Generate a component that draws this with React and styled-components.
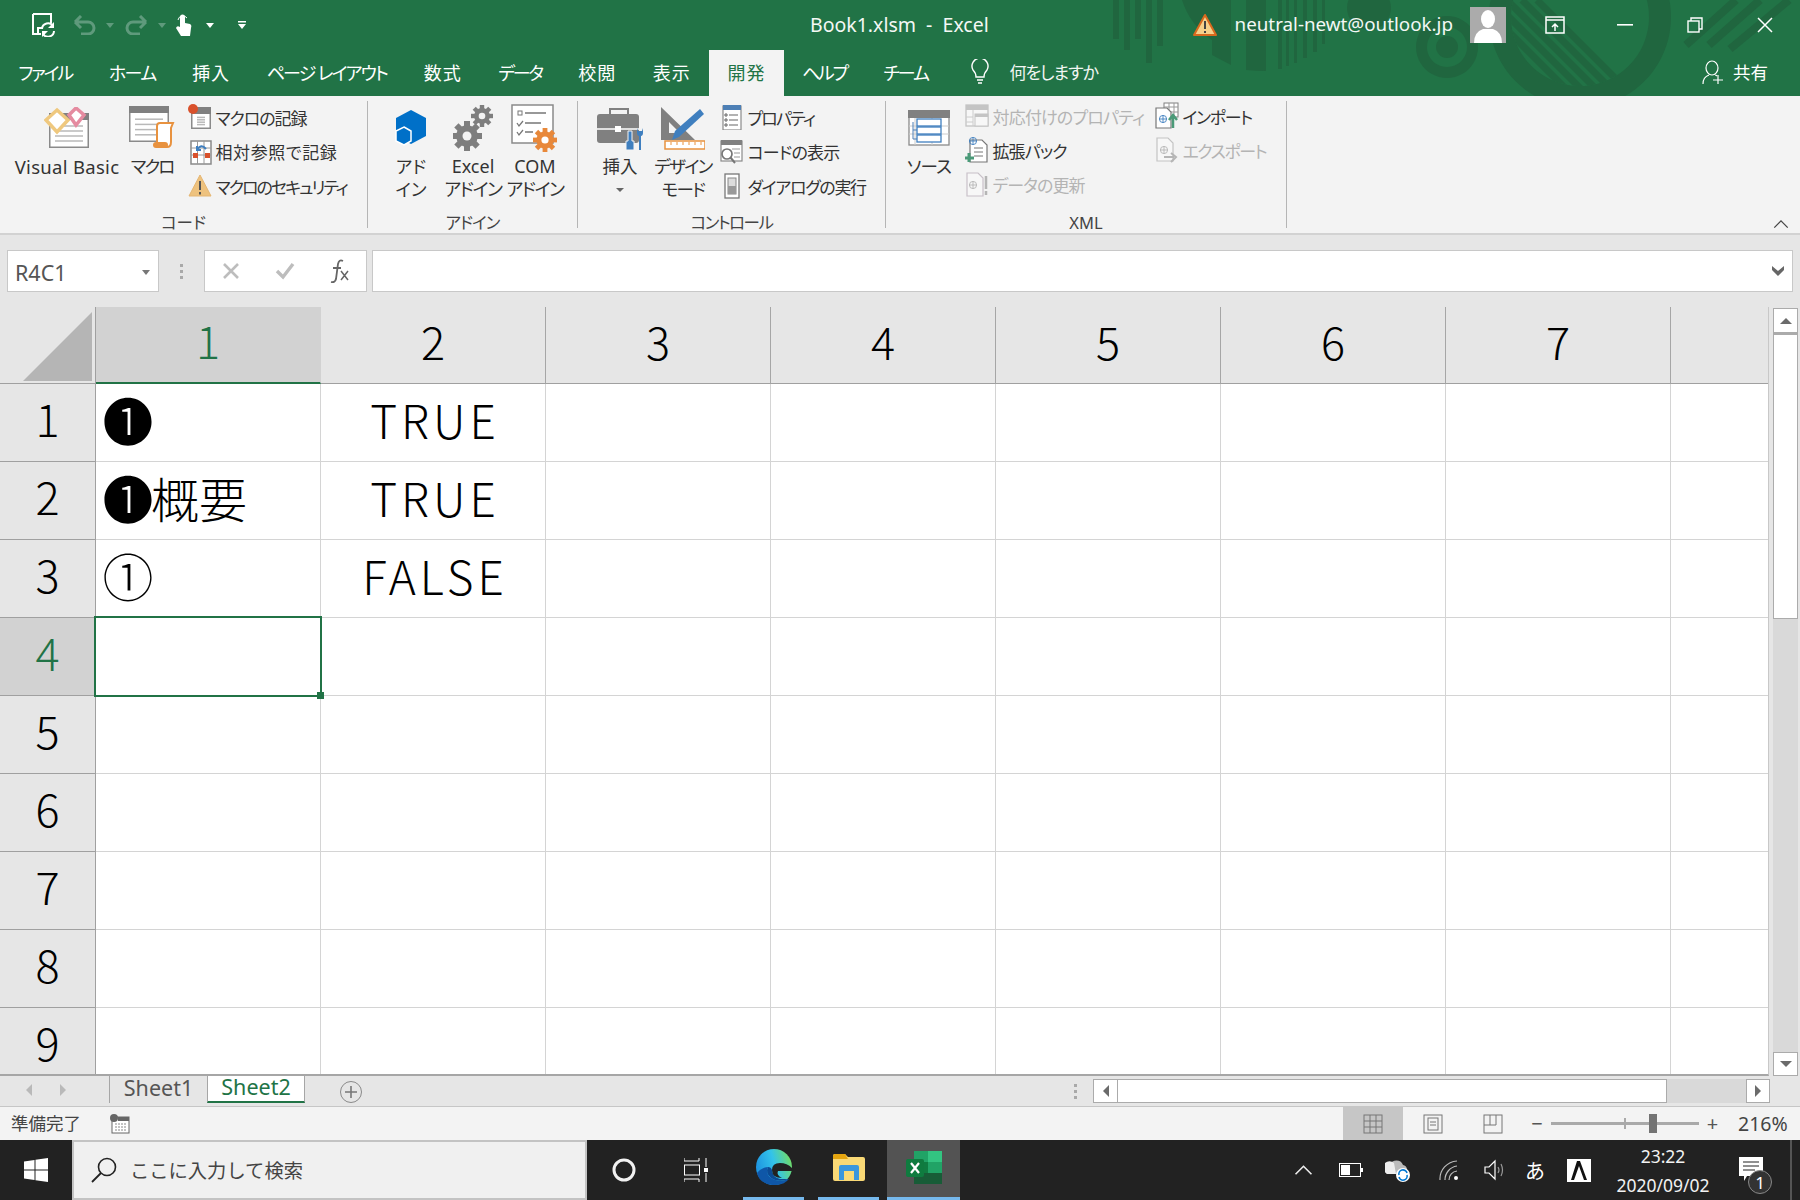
import React from 'react'
import styled, { createGlobalStyle } from 'styled-components'

const UI_FONT = `"Noto Sans", "Noto Sans CJK JP", sans-serif`
const SHEET_FONT = `"Noto Sans CJK JP", "Noto Sans", sans-serif`
const GREEN = '#217346'
const DARK_GREEN = '#20663f'

const GlobalStyle = createGlobalStyle`
html, body {
  margin: 0;
  padding: 0;
  background: #e6e6e6;
}
body {
  font-family: ${UI_FONT};
  font-feature-settings: "palt";
  overflow: hidden;
}
* {
  box-sizing: border-box;
}
`

const Page = styled.div`
display: flex;
flex-direction: column;
width: 1800px;
height: 1200px;
overflow: hidden;
`

/* ---------- title bar + tabs ---------- */

const GreenHead = styled.header`
position: relative;
height: 96px;
background-color: ${GREEN};
color: #fff;
flex-shrink: 0;
`
const HeadArt = styled.svg`
position: absolute;
left: 0;
top: 0;
width: 1800px;
height: 96px;
`
const TitleRow = styled.div`
position: relative;
display: flex;
align-items: center;
height: 50px;
`
const Qat = styled.div`
display: flex;
align-items: center;
width: 810px;
flex-shrink: 0;
padding-left: 32px;
`
const QatSlot = styled.span`
display: flex;
margin-left: ${props => props.$ml || 0}px;
`
const Title = styled.div`
font-size: 19.5px;
font-feature-settings: normal;
white-space: pre;
color: #f4f8f5;
padding-bottom: 2px;
`
const Account = styled.div`
display: flex;
align-items: center;
margin-left: auto;
`
const AccountName = styled.span`
font-size: 18.8px;
margin: 0 17px 2px 18px;
color: #f4f8f5;
`
const Avatar = styled.div`
display: flex;
width: 36px;
height: 36px;
background-color: #ababab;
margin-right: 14px;
overflow: hidden;
`
const WinButton = styled.div`
display: flex;
align-items: center;
justify-content: center;
width: 70px;
height: 50px;
`
const TabRow = styled.nav`
position: relative;
display: flex;
align-items: stretch;
height: 46px;
`
const Tab = styled.div`
display: flex;
align-items: center;
padding: 0 18.3px 3px;
font-size: 18px;
letter-spacing: ${props => props.$ls ?? 1}px;
white-space: pre;
background-color: ${props => (props.$active ? '#f3f3f3' : 'transparent')};
color: ${props => (props.$active ? GREEN : '#fff')};
`
const TellMe = styled.div`
display: flex;
align-items: center;
gap: 19px;
margin-left: 24px;
padding-bottom: 3px;
font-size: 17px;
letter-spacing: -1px;
color: #f1f6f3;
`
const Share = styled.div`
display: flex;
align-items: center;
gap: 9px;
margin-left: auto;
padding: 0 32px 3px 0;
font-size: 17.5px;
`

/* ---------- ribbon ---------- */

const Ribbon = styled.section`
display: flex;
height: 139px;
background-color: #f3f3f3;
border-bottom: 2px solid #d2d2d2;
color: #333;
font-size: 17px;
flex-shrink: 0;
`
const Group = styled.div`
display: flex;
flex-direction: column;
width: ${props => props.$w}px;
height: 127px;
margin-top: 5px;
border-right: 1px solid #b5b5b5;
flex-shrink: 0;
`
const GroupBody = styled.div`
display: flex;
flex: 1;
padding-left: ${props => props.$pad || 0}px;
`
const GroupLabel = styled.div`
height: 20px;
line-height: 20px;
margin-bottom: -5px;
font-size: 16.5px;
letter-spacing: ${props => props.$ls || 0}px;
text-align: center;
color: #444;
`
const LargeButton = styled.div`
display: flex;
flex-direction: column;
align-items: center;
width: ${props => props.$w}px;
flex-shrink: 0;
`
const LargeIcon = styled.div`
display: flex;
align-items: center;
justify-content: center;
height: 54px;
`
const LargeText = styled.div`
font-size: ${props => props.$fs || 17.5}px;
letter-spacing: ${props => props.$ls || 0}px;
line-height: 23px;
text-align: center;
white-space: nowrap;
`
const TightKana = styled.span`
letter-spacing: -1.4px;
`
const Caret = styled.div`
width: 0;
height: 0;
margin-top: 10px;
border: 4px solid transparent;
border-top: 4px solid #666;
border-bottom: 0;
`
const SmallColumn = styled.div`
display: flex;
flex-direction: column;
width: ${props => (props.$w ? `${props.$w}px` : 'auto')};
margin-left: ${props => props.$ml || 0}px;
margin-top: ${props => props.$top ?? -1}px;
`
const SmallButton = styled.div`
display: flex;
align-items: center;
gap: ${props => props.$gap ?? 3.5}px;
height: ${props => props.$h || 34.5}px;
white-space: nowrap;
font-size: 17px;
letter-spacing: ${props => props.$ls || 0}px;
color: ${props => (props.$off ? '#b4b4b4' : '#333')};
`
const Collapse = styled.div`
display: flex;
align-self: flex-end;
margin-left: auto;
margin-right: 11px;
margin-bottom: 4px;
`

/* ---------- formula bar ---------- */

const FormulaBar = styled.div`
display: flex;
align-items: center;
height: 72px;
padding: 0 7px;
background-color: #e6e6e6;
flex-shrink: 0;
`
const InputBox = styled.div`
display: flex;
align-items: center;
height: 42px;
background-color: #fff;
border: 1.5px solid #c8c8c8;
`
const NameBox = styled(InputBox)`
justify-content: space-between;
width: 152px;
padding: 2px 8px 0 7px;
font-size: 21.5px;
color: #555;
font-feature-settings: normal;
`
const GripDots = styled.div`
display: flex;
flex-direction: column;
gap: 3px;
width: 45px;
align-items: center;
`
const GripDot = styled.i`
display: block;
width: 3px;
height: 3px;
background-color: #a9a9a9;
`
const FxBox = styled(InputBox)`
justify-content: space-between;
width: 163px;
padding: 0 16px 0 17px;
`
const FormulaInput = styled(InputBox)`
flex: 1;
margin-left: 5px;
justify-content: flex-end;
padding-right: 7px;
`

/* ---------- sheet ---------- */

const SheetArea = styled.div`
display: flex;
height: 769px;
flex-shrink: 0;
background-color: #e6e6e6;
`
const Grid = styled.div`
display: grid;
grid-template-columns: 96px repeat(7, 225px) 98px;
grid-auto-rows: 78px;
grid-template-rows: 77px;
width: 1769px;
height: 769px;
overflow: hidden;
background-color: #fff;
border-bottom: 2px solid #a6a6a6;
border-right: 1px solid #c8c8c8;
`
const Corner = styled.div`
position: relative;
background-color: #e6e6e6;
border-right: 1px solid #a0a0a0;
border-bottom: 1px solid #a0a0a0;
`
const CornerMark = styled.div`
position: absolute;
left: 23px;
top: 5px;
width: 69px;
height: 69px;
background-color: #b5b5b5;
clip-path: polygon(100% 0, 100% 100%, 0 100%);
`
const HeaderCell = styled.div`
display: flex;
align-items: center;
justify-content: center;
font-family: ${SHEET_FONT};
font-weight: 300;
font-size: 45px;
font-feature-settings: normal;
padding-bottom: 10px;
background-color: ${props => (props.$on ? '#d2d2d2' : '#e6e6e6')};
color: ${props => (props.$on ? GREEN : '#000')};
`
const ColHead = styled(HeaderCell)`
border-right: 1px solid ${props => (props.$on ? '#d2d2d2' : '#a6a6a6')};
border-bottom: ${props => (props.$on ? `2px solid ${GREEN}` : '1px solid #a0a0a0')};
`
const RowHead = styled(HeaderCell)`
border-right: 1px solid #a0a0a0;
border-bottom: 1px solid #a0a0a0;
`
const Cell = styled.div`
position: relative;
display: flex;
align-items: center;
justify-content: ${props => (props.$center ? 'center' : 'flex-start')};
padding-left: ${props => (props.$center ? 4 : 9)}px;
padding-bottom: 7px;
font-family: ${SHEET_FONT};
font-weight: 300;
font-size: ${props => (props.$center ? 46 : 48)}px;
font-feature-settings: normal;
letter-spacing: ${props => (props.$center ? 4 : 0)}px;
white-space: nowrap;
color: #000;
border-right: 1px solid #d4d4d4;
border-bottom: 1px solid #d4d4d4;
`
const Circled = styled.span`
font-size: 51px;
margin: 0 -2.5px;
`
const ActiveBox = styled.div`
position: absolute;
z-index: 2;
left: -2px;
top: -2px;
right: -2px;
bottom: -2px;
border: 2px solid ${GREEN};
`
const FillHandle = styled.div`
position: absolute;
right: -4px;
bottom: -4px;
width: 7px;
height: 7px;
background-color: ${GREEN};
`
const VScroll = styled.div`
display: flex;
flex-direction: column;
width: 25px;
height: 769px;
margin-left: 4px;
padding-top: 1px;
`
const ScrollButton = styled.div`
display: flex;
align-items: center;
justify-content: center;
width: ${props => props.$w || '100%'};
height: ${props => props.$h || '25px'};
background-color: #fff;
border: 1.5px solid #ababab;
flex-shrink: 0;
`
const VThumb = styled.div`
height: 286px;
background-color: #fff;
border: 1.5px solid #ababab;
border-top-width: 2px;
flex-shrink: 0;
`
const VRest = styled.div`
flex: 1;
background-color: #d9d9d9;
`
const Arrow = styled.i`
width: 0;
height: 0;
border-style: solid;
border-color: transparent;
${props => props.$dir === 'up' && `border-width: 0 6px 6px; border-bottom-color: #6b6b6b;`}
${props => props.$dir === 'down' && `border-width: 6px 6px 0; border-top-color: #6b6b6b;`}
${props => props.$dir === 'left' && `border-width: 6px 6px 6px 0; border-right-color: ${props.$c || '#6b6b6b'};`}
${props => props.$dir === 'right' && `border-width: 6px 0 6px 6px; border-left-color: ${props.$c || '#6b6b6b'};`}
`

/* ---------- sheet tabs ---------- */

const TabsBar = styled.div`
display: flex;
align-items: stretch;
height: 31px;
background-color: #e6e6e6;
border-bottom: 1px solid #c6c6c6;
flex-shrink: 0;
`
const SheetNav = styled.div`
display: flex;
align-items: center;
justify-content: space-between;
width: 109px;
padding: 0 43px 2px 26px;
`
const SheetTab = styled.div`
display: flex;
align-items: center;
justify-content: center;
width: ${props => props.$w}px;
height: 27px;
padding-bottom: 3px;
font-size: 21.5px;
line-height: 24px;
font-feature-settings: normal;
background-color: ${props => (props.$active ? '#fff' : 'transparent')};
color: ${props => (props.$active ? GREEN : '#555')};
border-bottom: ${props => (props.$active ? `2px solid ${GREEN}` : 'none')};
border-right: ${props => (props.$active ? '1px solid #a6a6a6' : 'none')};
border-left: ${props => (props.$active || props.$sep ? '1px solid #a6a6a6' : 'none')};
`
const AddSheet = styled.div`
display: flex;
align-items: center;
justify-content: center;
width: 22px;
height: 22px;
margin: 5px 0 0 35px;
border: 1.5px solid #8a8a8a;
border-radius: 50%;
`
const HScroll = styled.div`
display: flex;
align-items: center;
margin-left: auto;
padding-right: 30px;
`
const HGrip = styled(GripDots)`
width: auto;
margin-right: 16px;
`
const HThumb = styled.div`
width: 549px;
height: 24px;
background-color: #fff;
border: 1.5px solid #ababab;
border-left: none;
`
const HRest = styled.div`
width: 79px;
height: 24px;
background-color: #d9d9d9;
`

/* ---------- status bar ---------- */

const StatusBar = styled.footer`
display: flex;
align-items: center;
height: 33px;
padding-left: 11px;
background-color: #f3f3f3;
color: #444;
font-size: 17.5px;
flex-shrink: 0;
`
const Ready = styled.span`
width: 99px;
padding-bottom: 2px;
font-feature-settings: normal;
`
const ViewButton = styled.div`
display: flex;
align-items: center;
justify-content: center;
width: ${props => props.$w || 60}px;
height: 33px;
background-color: ${props => (props.$on ? '#c6c6c6' : 'transparent')};
`
const StatusRight = styled.div`
display: flex;
align-items: center;
margin-left: auto;
`
const ZoomSign = styled.span`
width: ${props => props.$w || 26}px;
text-align: center;
font-size: 20px;
color: #555;
`
const ZoomTrack = styled.div`
position: relative;
width: 148px;
height: 3px;
background-color: #a9a9a9;
`
const ZoomTick = styled.div`
position: absolute;
left: 73px;
top: -4px;
width: 2px;
height: 11px;
background-color: #a9a9a9;
`
const ZoomThumb = styled.div`
position: absolute;
left: 98px;
top: -8px;
width: 8px;
height: 19px;
background-color: #737373;
`
const ZoomValue = styled.span`
width: 74px;
padding-left: 12px;
font-size: 19.5px;
font-feature-settings: normal;
color: #444;
`

/* ---------- taskbar ---------- */

const Taskbar = styled.div`
display: flex;
align-items: stretch;
height: 60px;
background-color: #222;
color: #fff;
flex-shrink: 0;
`
const StartButton = styled.div`
display: flex;
align-items: center;
justify-content: center;
width: 72px;
`
const SearchBox = styled.div`
display: flex;
align-items: center;
gap: 13px;
width: 515px;
padding-left: 17px;
background-color: #f0f0f0;
border: 2px solid #c3c3c3;
font-size: 19.3px;
font-feature-settings: normal;
color: #444;
`
const TaskIcon = styled.div`
display: flex;
align-items: center;
justify-content: center;
width: ${props => props.$w}px;
margin-left: ${props => props.$ml || 0}px;
`
const PinnedApp = styled.div`
display: flex;
align-items: center;
justify-content: center;
width: ${props => props.$w}px;
margin-left: ${props => props.$ml || 0}px;
padding-bottom: 3px;
background-color: ${props => (props.$on ? '#535353' : 'transparent')};
border-bottom: 3px solid #76b9ed;
`
const Tray = styled.div`
display: flex;
align-items: stretch;
margin-left: auto;
`
const TrayItem = styled.div`
display: flex;
align-items: center;
justify-content: center;
width: ${props => props.$w}px;
font-size: ${props => props.$fs || 17}px;
`
const Clock = styled.div`
display: flex;
flex-direction: column;
align-items: center;
justify-content: center;
gap: 5px;
width: 124px;
font-size: 17.5px;
line-height: 24px;
font-feature-settings: normal;
color: #f2f2f2;
`
const NotifyWrap = styled.div`
position: relative;
display: flex;
align-items: center;
justify-content: center;
width: 65px;
padding-right: 14px;
`
const NotifyBadge = styled.div`
position: absolute;
left: 23px;
top: 30px;
display: flex;
align-items: center;
justify-content: center;
width: 24px;
height: 24px;
border-radius: 50%;
background-color: #333;
border: 1.5px solid #888;
font-size: 17px;
`
const DesktopEdge = styled.div`
width: 10px;
border-left: 2px solid #555;
`

/* ---------- drawings ---------- */

const Sheetlet = ({ x, y, w, h, head = '#808080' }) => {
  const lines = []
  for (let i = 1; i < 5; i++) {
    lines.push(<line key={i} x1={x + 6} x2={x + w - 6} y1={y + 8 + (i * (h - 10)) / 5} y2={y + 8 + (i * (h - 10)) / 5} stroke="#b9b9b9" strokeWidth="1.5" />)
  }
  return (
    <g>
      <rect x={x + 0.75} y={y + 0.75} width={w - 1.5} height={h - 1.5} fill="#fff" stroke="#8a8a8a" strokeWidth="1.5" />
      <rect x={x} y={y} width={w} height={7} fill={head} />
      {lines}
    </g>
  )
}

const VbIcon = () => (
  <svg width="46" height="42" viewBox="0 0 46 42">
    <Sheetlet x={5} y={6} w={40} h={35} />
    <path d="M13 3 L24 13 L13 25 L2 13 Z" fill="#fff" stroke="#efc87e" strokeWidth="3.5" />
    <path d="M32 1 L40 8 L32 18 L25 8 Z" fill="#fff" stroke="#e58ba0" strokeWidth="3.5" />
  </svg>
)
const MacroIcon = () => (
  <svg width="46" height="44" viewBox="0 0 46 44">
    <Sheetlet x={0} y={0} w={40} h={36} />
    <path d="M28 20 Q28 17 31 17 L44 17 L42 22 L42 36 Q42 41 38 41 L28 41 Z" fill="#fff" stroke="#e8923f" strokeWidth="2" />
    <rect x="24" y="36" width="15" height="6" rx="3" fill="#e8923f" />
  </svg>
)
const RecordIcon = () => (
  <svg width="24" height="26" viewBox="0 0 24 26">
    <Sheetlet x={3} y={3} w={20} h={22} />
    <circle cx="5" cy="5" r="5" fill="#d9512c" />
  </svg>
)
const RelativeIcon = () => (
  <svg width="24" height="26" viewBox="0 0 24 26">
    <rect x="3" y="2" width="20" height="23" fill="#fff" stroke="#8a8a8a" strokeWidth="1.5" />
    <path d="M3 9H23M3 16H23M9.5 2V25M16 2V25" stroke="#9a9a9a" />
    <rect x="5" y="14" width="5" height="5" fill="#d9512c" />
    <rect x="17" y="14" width="5" height="5" fill="#d9512c" />
    <path d="M9 11 Q13 4 18 10 M9 7V11H13" fill="none" stroke="#3f7fbf" strokeWidth="2" />
  </svg>
)
const WarnSoftIcon = () => (
  <svg width="24" height="24" viewBox="0 0 24 24">
    <path d="M12 1 L23 22 L1 22 Z" fill="#eec27e" stroke="#e5b672" strokeLinejoin="round" />
    <path d="M12 7V16M12 18V20.5" stroke="#555" strokeWidth="2" />
  </svg>
)
const AddinIcon = () => (
  <svg width="32" height="36" viewBox="0 0 32 36">
    <path d="M16 0 L31 8 L31 26 L16 34 L1 26 L1 8 Z" fill="#0070c8" />
    <path d="M9 17 L16 21 L16 31 L9 35 L1 31 L1 21 Z" fill="#0070c8" stroke="#fff" strokeWidth="1.5" />
  </svg>
)
const Gear = ({ cx, cy, r, fill, hole = '#f3f3f3' }) => {
  const teeth = []
  for (let a = 0; a < 4; a++) {
    teeth.push(<rect key={a} x={cx - r * 0.2} y={cy - r} width={r * 0.4} height={r * 2} fill={fill} transform={`rotate(${a * 45} ${cx} ${cy})`} />)
  }
  return (
    <g>
      {teeth}
      <circle cx={cx} cy={cy} r={r * 0.72} fill={fill} />
      <circle cx={cx} cy={cy} r={r * 0.3} fill={hole} />
    </g>
  )
}
const GearsIcon = () => (
  <svg width="40" height="46" viewBox="0 0 40 46">
    <Gear cx={29} cy={11} r={11} fill="#7e7e7e" />
    <Gear cx={14} cy={31} r={15} fill="#7e7e7e" />
  </svg>
)
const ComIcon = () => (
  <svg width="48" height="48" viewBox="0 0 48 48">
    <rect x="1" y="1" width="41" height="38" fill="#fff" stroke="#8a8a8a" strokeWidth="1.5" />
    <rect x="7" y="7" width="4" height="4" fill="none" stroke="#777" />
    <path d="M14 9H35M6 19l2 3 4-5M14 19H30M6 28l2 3 4-5M14 28H22" fill="none" stroke="#777" strokeWidth="1.3" />
    <Gear cx={34} cy={36} r={12} fill="#e8883a" hole="#fff" />
  </svg>
)
const BriefcaseIcon = () => (
  <svg width="46" height="44" viewBox="0 0 46 44">
    <path d="M13 8V3H31V8" fill="none" stroke="#808080" strokeWidth="2" />
    <rect x="0" y="8" width="42" height="29" rx="3" fill="#808080" />
    <path d="M0 23H42" stroke="#fff" strokeWidth="1.3" />
    <rect x="18" y="20" width="6" height="6" fill="#fff" />
    <path d="M31 25h4v10h2v9h-8v-9h2z" fill="#3f7fbf" stroke="#f3f3f3" />
    <path d="M40 22v5c0 2 1 3 2 3v14h2V30c1 0 2-1 2-3v-5l-1 3h-4z" fill="#3f7fbf" />
  </svg>
)
const DesignIcon = () => (
  <svg width="44" height="44" viewBox="0 0 44 44">
    <path d="M0 1 L34 34 L0 34 Z M8 16 L8 27 L19 27 Z" fill="#808080" fillRule="evenodd" />
    <path d="M11 34 L14 25 L39 3 L43 8 L18 31 Z" fill="#3f7fbf" />
    <rect x="4" y="35" width="40" height="8" fill="#fff" stroke="#e8923f" strokeWidth="1.5" />
    <path d="M10 36v3M16 36v3M22 36v3M28 36v3M34 36v3M40 36v3" stroke="#e8923f" />
  </svg>
)
const PropsIcon = () => (
  <svg width="24" height="26" viewBox="0 0 24 26">
    <rect x="3" y="2" width="18" height="24" fill="#fff" stroke="#8a8a8a" strokeWidth="1.2" />
    <rect x="3" y="1" width="18" height="5" fill="#4d7fb5" />
    <path d="M9 11H18M9 16H18M9 21H18" stroke="#666" strokeWidth="1.2" />
    <path d="M5 10h2v2H5zM5 15h2v2H5zM5 20h2v2H5z" fill="none" stroke="#666" />
  </svg>
)
const CodeIcon = () => (
  <svg width="24" height="26" viewBox="0 0 24 26">
    <rect x="1" y="2" width="21" height="20" fill="#fff" stroke="#8a8a8a" strokeWidth="1.2" />
    <rect x="1" y="1" width="21" height="5" fill="#808080" />
    <path d="M12 10H20M14 14H20M14 18H20" stroke="#999" />
    <circle cx="7" cy="15" r="5" fill="#fff" stroke="#777" strokeWidth="1.7" />
    <path d="M10.5 18.5 L15 24" stroke="#777" strokeWidth="2" />
  </svg>
)
const DialogIcon = () => (
  <svg width="24" height="26" viewBox="0 0 24 26">
    <rect x="5" y="1" width="14" height="24" fill="#fff" stroke="#777" strokeWidth="1.3" />
    <rect x="8" y="5" width="8" height="16" fill="#dcdcdc" stroke="#888" />
    <rect x="8" y="13" width="8" height="8" fill="#999" />
  </svg>
)
const SourceIcon = () => (
  <svg width="42" height="36" viewBox="0 0 42 36">
    <rect x="1" y="1" width="40" height="34" fill="#fff" stroke="#8a8a8a" strokeWidth="1.3" />
    <rect x="0" y="0" width="42" height="8" fill="#808080" />
    <path d="M7 8V35M1 16H41M1 24H41M24 8V35" stroke="#ccc" />
    <path d="M5 12V29H9M5 20H9" fill="none" stroke="#4d7fb5" />
    <rect x="9" y="9" width="24" height="7" fill="#fff" stroke="#3f7fbf" strokeWidth="1.3" />
    <rect x="9" y="17" width="24" height="7" fill="#fff" stroke="#3f7fbf" strokeWidth="1.3" />
    <rect x="9" y="25" width="24" height="7" fill="#fff" stroke="#3f7fbf" strokeWidth="1.3" />
  </svg>
)
const MapPropsIcon = () => (
  <svg width="24" height="24" viewBox="0 0 24 24">
    <rect x="1" y="1" width="22" height="21" fill="#f7f7f7" stroke="#c4c4c4" strokeWidth="1.3" />
    <rect x="1" y="1" width="22" height="5" fill="#c4c4c4" />
    <path d="M8 6V22M1 13H8M1 18H8" stroke="#ccc" />
    <rect x="10" y="10" width="13" height="12" fill="#f7f7f7" stroke="#c4c4c4" />
    <rect x="10" y="10" width="13" height="3" fill="#c4c4c4" />
  </svg>
)
const Globe = ({ cx, cy, c }) => (
  <g stroke={c} fill="none" strokeWidth="0.9">
    <circle cx={cx} cy={cy} r="3.6" />
    <path d={`M${cx - 3.6} ${cy}H${cx + 3.6}M${cx} ${cy - 3.6}V${cy + 3.6}`} />
  </g>
)
const PackIcon = () => (
  <svg width="24" height="28" viewBox="0 0 24 28">
    <path d="M5 4H17L22 9V26H5Z" fill="#fff" stroke="#777" strokeWidth="1.2" />
    <path d="M9 12H18M9 16H18M9 20H18" stroke="#777" />
    <Globe cx={8} cy={5} c="#3f7fbf" />
    <path d="M4 17V26M0 22H9" stroke="#4a9a78" strokeWidth="3" />
  </svg>
)
const RefreshIcon = () => (
  <svg width="24" height="26" viewBox="0 0 24 26">
    <path d="M2 2H13L18 7V25H2Z" fill="#f7f7f7" stroke="#c8c0c8" strokeWidth="1.2" />
    <Globe cx={8} cy={14} c="#b5b5b5" />
    <path d="M21 5V18M21 20V24" stroke="#b5b5b5" strokeWidth="2.5" />
  </svg>
)
const ImportIcon = () => (
  <svg width="24" height="28" viewBox="0 0 24 28">
    <rect x="9" y="1" width="14" height="14" fill="#fff" stroke="#808080" />
    <path d="M9 5H23M9 10H23M14 1V15M19 1V15" stroke="#999" />
    <path d="M1 6H12L16 10V26H1Z" fill="#fff" stroke="#777" strokeWidth="1.2" />
    <Globe cx={8} cy={17} c="#3f7fbf" />
    <path d="M18 26V14M14 18L18 13L22 18" fill="none" stroke="#4a9a78" strokeWidth="2.5" />
  </svg>
)
const ExportIcon = () => (
  <svg width="24" height="28" viewBox="0 0 24 28">
    <path d="M2 2H13L18 7V25H2Z" fill="#f7f7f7" stroke="#c4c4c4" strokeWidth="1.2" />
    <Globe cx={9} cy={14} c="#b5b5b5" />
    <path d="M9 21H19M16 17L21 21L16 26" fill="none" stroke="#b5b5b5" strokeWidth="2" />
  </svg>
)
const Chevron = ({ size = 16, c = '#444', w = 1.3 }) => (
  <svg width={size} height={size * 0.6} viewBox="0 0 16 10">
    <path d="M1 9L8 2L15 9" fill="none" stroke={c} strokeWidth={w} />
  </svg>
)
const SmallCaret = ({ c = '#fff' }) => (
  <svg width="8" height="5" viewBox="0 0 8 5"><path d="M0 0H8L4 5Z" fill={c} /></svg>
)
const EdgeLogo = () => (
  <svg width="36" height="36" viewBox="0 0 36 36">
    <defs>
      <linearGradient id="edgeTop" x1="0" y1="0.7" x2="1" y2="0.4">
        <stop offset="0" stopColor="#1b8fe0" />
        <stop offset="0.55" stopColor="#33c3ea" />
        <stop offset="1" stopColor="#6fdc6a" />
      </linearGradient>
    </defs>
    <circle cx="18" cy="18" r="18" fill="url(#edgeTop)" />
    <path d="M1 24 Q3 34 16 36 Q27 37 33 30 Q22 34 15 29 Q9 24 12 18 Q6 18 1 24 Z" fill="#0f57a8" />
    <path d="M12 18 Q9 24 15 29 Q22 34 33 30 L24 30 Q16 28 16 21 Q15 18 12 18 Z" fill="#0c4a94" />
    <path d="M16 21 Q16 14 24 14 Q31 14 36 19 L36 22 L22 22 Q20 26 26 29 Q16 29 16 21 Z" fill="#222" />
  </svg>
)

const Header = () => (
  <GreenHead>
    <HeadArt viewBox="0 0 1800 96">
      <defs>
        <clipPath id="ringInner"><circle cx="1580" cy="17" r="69" /></clipPath>
      </defs>
      <g fill={DARK_GREEN}>
        <rect x="1113" y="0" width="6" height="39" />
        <rect x="1124" y="0" width="6" height="50" />
        <rect x="1135" y="0" width="6" height="39" />
        <rect x="1146" y="0" width="6" height="63" />
        <rect x="1157" y="0" width="6" height="46" />
        <path d="M1182 0 Q1190 25 1212 40 L1212 55 L1231 65 L1231 0 Z" />
        <path d="M1246 0 H1266 V71 Q1255 71 1246 70 Z" />
        <rect x="1278" y="0" width="4" height="69" />
        <rect x="1286" y="0" width="3" height="66" />
        <rect x="1294" y="0" width="3" height="63" />
        <rect x="1303" y="0" width="4" height="58" />
        <rect x="1313" y="0" width="4" height="52" />
        <rect x="1322" y="0" width="3" height="44" />
        <circle cx="1369" cy="8" r="22" />
        <path fillRule="evenodd" d="M1447 16 a31 31 0 1 0 0.01 0 Z M1447 27 a20 20 0 1 1 -0.01 0 Z" />
        <circle cx="1447" cy="47" r="11" />
        <path fillRule="evenodd" d="M1580 -74 a91 91 0 1 0 0.01 0 Z M1580 -52 a69 69 0 1 1 -0.01 0 Z" />
      </g>
      <g stroke={DARK_GREEN} strokeWidth="7" clipPath="url(#ringInner)">
        <path d="M1537 0L1637 100M1522 0L1622 100M1507 0L1607 100M1492 0L1592 100M1477 0L1577 100" />
      </g>
      <g stroke={DARK_GREEN} strokeWidth="8">
        <path d="M1686 45L1736 0M1709 45L1760 0M1730 49L1789 0" />
      </g>
    </HeadArt>
    <TitleRow>
      <Qat>
        <QatSlot>
          <svg width="24" height="24" viewBox="0 0 24 24">
            <path d="M1 1H19V10M1 1V21H9" fill="none" stroke="#fff" strokeWidth="2" />
            <path d="M6 21V15H10" fill="none" stroke="#fff" strokeWidth="2" />
            <path d="M10 16 A6 6 0 0 1 21 13 M22 18 A6 6 0 0 1 11 21" fill="none" stroke="#fff" strokeWidth="2" />
            <path d="M22 9V15H16L22 9ZM10 24V18H16Z" fill="#fff" />
          </svg>
        </QatSlot>
        <QatSlot $ml={17}>
          <svg width="23" height="20" viewBox="0 0 23 20">
            <path d="M2 7H15A6 6 0 0 1 15 19H8M2 7L8 1M2 7L8 13" fill="none" stroke="#5f9a7c" strokeWidth="3" />
          </svg>
        </QatSlot>
        <QatSlot $ml={10}><SmallCaret c="#5f9a7c" /></QatSlot>
        <QatSlot $ml={11}>
          <svg width="23" height="20" viewBox="0 0 23 20">
            <path d="M21 7H8A6 6 0 0 0 8 19H15M21 7L15 1M21 7L15 13" fill="none" stroke="#5f9a7c" strokeWidth="3" />
          </svg>
        </QatSlot>
        <QatSlot $ml={10}><SmallCaret c="#5f9a7c" /></QatSlot>
        <QatSlot $ml={10}>
          <svg width="16" height="22" viewBox="0 0 16 22">
            <path d="M4 8V3A2 2 0 0 1 9 3V9L14 10Q16 11 15 14L14 22H5L0 14Q1 11 4 13Z" fill="#fff" />
            <path d="M2 6A5 5 0 0 1 11 4" fill="none" stroke="#fff" strokeWidth="1" />
          </svg>
        </QatSlot>
        <QatSlot $ml={14}><SmallCaret /></QatSlot>
        <QatSlot $ml={24}>
          <svg width="8" height="8" viewBox="0 0 8 8"><path d="M0 0H8V1.4H0ZM0 3H8L4 8Z" fill="#fff" /></svg>
        </QatSlot>
      </Qat>
      <Title>Book1.xlsm  -  Excel</Title>
      <Account>
        <svg width="24" height="24" viewBox="0 0 24 24">
          <path d="M12 2 L23 22 L1 22 Z" fill="#f6d08a" stroke="#d9691e" strokeWidth="2" strokeLinejoin="round" />
          <path d="M12 8V16M12 18V20" stroke="#444" strokeWidth="2" />
        </svg>
        <AccountName>neutral-newt@outlook.jp</AccountName>
        <Avatar>
          <svg width="36" height="36" viewBox="0 0 36 36">
            <ellipse cx="18" cy="12" rx="7" ry="9" fill="#fff" />
            <path d="M4 36 Q4 25 13 22 L23 22 Q32 25 32 36 Z" fill="#fff" />
          </svg>
        </Avatar>
        <WinButton>
          <svg width="20" height="18" viewBox="0 0 20 18">
            <rect x="1" y="1" width="18" height="16" fill="none" stroke="#fff" strokeWidth="1.5" />
            <path d="M1 4H19M10 15V8M7 11L10 8L13 11" fill="none" stroke="#fff" strokeWidth="1.5" />
          </svg>
        </WinButton>
        <WinButton><svg width="16" height="2" viewBox="0 0 16 2"><rect width="16" height="1.6" fill="#fff" /></svg></WinButton>
        <WinButton>
          <svg width="16" height="16" viewBox="0 0 16 16">
            <path d="M4 4V1H15V12H12" fill="none" stroke="#fff" strokeWidth="1.4" />
            <rect x="1" y="4" width="11" height="11" fill="none" stroke="#fff" strokeWidth="1.4" />
          </svg>
        </WinButton>
        <WinButton>
          <svg width="16" height="16" viewBox="0 0 16 16"><path d="M1 1L15 15M15 1L1 15" stroke="#fff" strokeWidth="1.5" /></svg>
        </WinButton>
      </Account>
    </TitleRow>
    <TabRow>
      <Tab $ls={-2.1}>ファイル</Tab>
      <Tab $ls={-1.6}>ホーム</Tab>
      <Tab>挿入</Tab>
      <Tab $ls={-1.8}>ページ レイアウト</Tab>
      <Tab>数式</Tab>
      <Tab $ls={-2.3}>データ</Tab>
      <Tab>校閲</Tab>
      <Tab>表示</Tab>
      <Tab $active>開発</Tab>
      <Tab $ls={-2.3}>ヘルプ</Tab>
      <Tab $ls={-1.9}>チーム</Tab>
      <TellMe>
        <svg width="20" height="26" viewBox="0 0 20 26">
          <path d="M6 18 Q6 14 3 11 A8 8 0 1 1 17 11 Q14 14 14 18 Z" fill="none" stroke="#fff" strokeWidth="1.4" />
          <path d="M7 21H13M8 24H12" stroke="#fff" strokeWidth="1.6" />
        </svg>
        何をしますか
      </TellMe>
      <Share>
        <svg width="22" height="24" viewBox="0 0 22 24">
          <ellipse cx="10" cy="8" rx="6" ry="7" fill="none" stroke="#fff" strokeWidth="1.2" />
          <path d="M1 24 Q1 17 7 15 M13 15 Q14 15 15 16" fill="none" stroke="#fff" strokeWidth="1.2" />
          <path d="M16 15V24M11 20H21" stroke="#fff" strokeWidth="1.2" />
        </svg>
        共有
      </Share>
    </TabRow>
  </GreenHead>
)

const RibbonBar = () => (
  <Ribbon>
    <Group $w={368}>
      <GroupBody $pad={8}>
        <LargeButton $w={118}>
          <LargeIcon><VbIcon /></LargeIcon>
          <LargeText $fs={18.5} $ls={0.3}>Visual Basic</LargeText>
        </LargeButton>
        <LargeButton $w={52}>
          <LargeIcon><MacroIcon /></LargeIcon>
          <LargeText $ls={-2}>マクロ</LargeText>
        </LargeButton>
        <SmallColumn $ml={10}>
          <SmallButton $ls={-1.1}><RecordIcon />マクロの記録</SmallButton>
          <SmallButton $ls={0.6}><RelativeIcon />相対参照で記録</SmallButton>
          <SmallButton $ls={-2}><WarnSoftIcon />マクロのセキュリティ</SmallButton>
        </SmallColumn>
      </GroupBody>
      <GroupLabel>コード</GroupLabel>
    </Group>
    <Group $w={210}>
      <GroupBody $pad={12}>
        <LargeButton $w={62}>
          <LargeIcon><AddinIcon /></LargeIcon>
          <LargeText>アド<br />イン</LargeText>
        </LargeButton>
        <LargeButton $w={62}>
          <LargeIcon><GearsIcon /></LargeIcon>
          <LargeText $fs={18}>Excel<br /><TightKana>アドイン</TightKana></LargeText>
        </LargeButton>
        <LargeButton $w={62}>
          <LargeIcon><ComIcon /></LargeIcon>
          <LargeText $fs={18}>COM<br /><TightKana>アドイン</TightKana></LargeText>
        </LargeButton>
      </GroupBody>
      <GroupLabel $ls={-1}>アドイン</GroupLabel>
    </Group>
    <Group $w={308}>
      <GroupBody $pad={12}>
        <LargeButton $w={60}>
          <LargeIcon><BriefcaseIcon /></LargeIcon>
          <LargeText>挿入</LargeText>
          <Caret />
        </LargeButton>
        <LargeButton $w={66}>
          <LargeIcon><DesignIcon /></LargeIcon>
          <LargeText $ls={-1.7}>デザイン<br />モード</LargeText>
        </LargeButton>
        <SmallColumn $ml={4}>
          <SmallButton $ls={-1.8}><PropsIcon />プロパティ</SmallButton>
          <SmallButton $ls={-0.8}><CodeIcon />コードの表示</SmallButton>
          <SmallButton $ls={-1.3}><DialogIcon />ダイアログの実行</SmallButton>
        </SmallColumn>
      </GroupBody>
      <GroupLabel $ls={-1.5}>コントロール</GroupLabel>
    </Group>
    <Group $w={401}>
      <GroupBody $pad={14}>
        <LargeButton $w={58}>
          <LargeIcon><SourceIcon /></LargeIcon>
          <LargeText $ls={-0.8}>ソース</LargeText>
        </LargeButton>
        <SmallColumn $ml={7} $w={190} $top={-2}>
          <SmallButton $h={34} $ls={-0.8} $off><MapPropsIcon />対応付けのプロパティ</SmallButton>
          <SmallButton $h={34} $ls={-0.9}><PackIcon />拡張パック</SmallButton>
          <SmallButton $h={34} $ls={-1} $off><RefreshIcon />データの更新</SmallButton>
        </SmallColumn>
        <SmallColumn $top={-2}>
          <SmallButton $h={34} $ls={-1.4}><ImportIcon />インポート</SmallButton>
          <SmallButton $h={34} $ls={-1.5} $off><ExportIcon />エクスポート</SmallButton>
        </SmallColumn>
      </GroupBody>
      <GroupLabel>XML</GroupLabel>
    </Group>
    <Collapse><Chevron /></Collapse>
  </Ribbon>
)

const Formula = () => (
  <FormulaBar>
    <NameBox>
      R4C1
      <SmallCaret c="#777" />
    </NameBox>
    <GripDots>
      <GripDot /><GripDot /><GripDot />
    </GripDots>
    <FxBox>
      <svg width="18" height="18" viewBox="0 0 18 18"><path d="M2 2L16 16M16 2L2 16" stroke="#bdbdbd" strokeWidth="2.6" /></svg>
      <svg width="20" height="18" viewBox="0 0 20 18"><path d="M2 9L8 15L18 2" fill="none" stroke="#bdbdbd" strokeWidth="3.4" /></svg>
      <svg width="20" height="26" viewBox="0 0 20 26">
        <path d="M13 3Q9 1 8 6L6 21Q5 25 1 24M3 10H11" fill="none" stroke="#666" strokeWidth="1.8" />
        <path d="M11 13L18 22M18 13L11 22" stroke="#666" strokeWidth="1.5" />
      </svg>
    </FxBox>
    <FormulaInput>
      <svg width="14" height="12" viewBox="0 0 14 12"><path d="M1 1L7 6L13 1V5L7 11L1 5Z" fill="#666" /></svg>
    </FormulaInput>
  </FormulaBar>
)

const COLS = [1, 2, 3, 4, 5, 6, 7]
const ROWS = [1, 2, 3, 4, 5, 6, 7, 8, 9]
const CELLS = {
  '1-1': <Circled>❶</Circled>,
  '1-2': 'TRUE',
  '2-1': <><Circled>❶</Circled>概要</>,
  '2-2': 'TRUE',
  '3-1': <Circled>①</Circled>,
  '3-2': 'FALSE',
}

const Sheet = () => (
  <SheetArea>
    <Grid>
      <Corner><CornerMark /></Corner>
      {COLS.map(c => <ColHead key={c} $on={c === 1}>{c}</ColHead>)}
      <ColHead />
      {ROWS.map(r => (
        <React.Fragment key={r}>
          <RowHead $on={r === 4}>{r}</RowHead>
          {[...COLS, 8].map(c => (
            <Cell key={c} $center={c === 2}>
              {CELLS[`${r}-${c}`]}
              {r === 4 && c === 1 && (
                <ActiveBox><FillHandle /></ActiveBox>
              )}
            </Cell>
          ))}
        </React.Fragment>
      ))}
    </Grid>
    <VScroll>
      <ScrollButton><Arrow $dir="up" /></ScrollButton>
      <VThumb />
      <VRest />
      <ScrollButton $h="24px"><Arrow $dir="down" /></ScrollButton>
    </VScroll>
  </SheetArea>
)

const SheetTabs = () => (
  <TabsBar>
    <SheetNav>
      <Arrow $dir="left" $c="#b9b9b9" />
      <Arrow $dir="right" $c="#b9b9b9" />
    </SheetNav>
    <SheetTab $w={98} $sep>Sheet1</SheetTab>
    <SheetTab $w={98} $active>Sheet2</SheetTab>
    <AddSheet>
      <svg width="12" height="12" viewBox="0 0 12 12"><path d="M6 0V12M0 6H12" stroke="#777" strokeWidth="1.6" /></svg>
    </AddSheet>
    <HScroll>
      <HGrip><GripDot /><GripDot /><GripDot /></HGrip>
      <ScrollButton $w="25px" $h="24px"><Arrow $dir="left" /></ScrollButton>
      <HThumb />
      <HRest />
      <ScrollButton $w="24px" $h="24px"><Arrow $dir="right" /></ScrollButton>
    </HScroll>
  </TabsBar>
)

const Status = () => (
  <StatusBar>
    <Ready>準備完了</Ready>
    <svg width="20" height="20" viewBox="0 0 20 20">
      <rect x="2" y="3" width="17" height="16" fill="#fff" stroke="#666" />
      <rect x="8" y="3" width="11" height="4" fill="#666" />
      <path d="M5 10H16M5 13H16M5 16H16" stroke="#888" strokeDasharray="2 1" />
      <circle cx="4" cy="4" r="4" fill="#666" />
    </svg>
    <StatusRight>
      <ViewButton $on>
        <svg width="20" height="20" viewBox="0 0 20 20">
          <rect x="1" y="1" width="18" height="18" fill="none" stroke="#777" />
          <path d="M7 1V19M13 1V19M1 7H19M1 13H19" stroke="#777" />
        </svg>
      </ViewButton>
      <ViewButton>
        <svg width="20" height="20" viewBox="0 0 20 20">
          <rect x="1" y="1" width="18" height="18" fill="none" stroke="#777" />
          <rect x="5" y="4" width="10" height="12" fill="none" stroke="#777" />
          <path d="M7 8H13M7 11H13" stroke="#777" />
        </svg>
      </ViewButton>
      <ViewButton>
        <svg width="20" height="20" viewBox="0 0 20 20">
          <rect x="1" y="1" width="18" height="18" fill="none" stroke="#777" />
          <path d="M1 11H13V1M7 1V11" fill="none" stroke="#777" />
        </svg>
      </ViewButton>
      <ZoomSign $w={28}>−</ZoomSign>
      <ZoomTrack>
        <ZoomTick />
        <ZoomThumb />
      </ZoomTrack>
      <ZoomSign $w={27}>+</ZoomSign>
      <ZoomValue>216%</ZoomValue>
    </StatusRight>
  </StatusBar>
)

const Task = () => (
  <Taskbar>
    <StartButton>
      <svg width="24" height="24" viewBox="0 0 24 24">
        <path d="M0 3.5L10.5 2V11.5H0ZM11.5 1.8L24 0V11.5H11.5ZM0 12.5H10.5V22L0 20.5ZM11.5 12.5H24V24L11.5 22.2Z" fill="#fff" />
      </svg>
    </StartButton>
    <SearchBox>
      <svg width="26" height="26" viewBox="0 0 26 26">
        <circle cx="16" cy="10" r="8.5" fill="none" stroke="#222" strokeWidth="1.6" />
        <path d="M10 16L1 25" stroke="#222" strokeWidth="1.8" />
      </svg>
      ここに入力して検索
    </SearchBox>
    <TaskIcon $w={74}>
      <svg width="24" height="24" viewBox="0 0 24 24"><circle cx="12" cy="12" r="10" fill="none" stroke="#f2f2f2" strokeWidth="3" /></svg>
    </TaskIcon>
    <TaskIcon $w={70}>
      <svg width="24" height="24" viewBox="0 0 24 24">
        <path d="M0 0V3H15V0M0 24V21H15V24" fill="none" stroke="#fff" />
        <rect x="0.5" y="7" width="15" height="10" fill="none" stroke="#fff" />
        <path d="M22 0V9M22 15V24" stroke="#fff" />
        <rect x="20" y="10" width="4" height="4" fill="#fff" />
      </svg>
    </TaskIcon>
    <PinnedApp $w={61} $ml={12}><EdgeLogo /></PinnedApp>
    <PinnedApp $w={61} $ml={14}>
      <svg width="32" height="27" viewBox="0 0 32 27">
        <path d="M0 2Q0 0 2 0H12L15 3H30Q32 3 32 5V25Q32 27 30 27H2Q0 27 0 25Z" fill="#f9d976" />
        <path d="M0 2Q0 0 2 0H12L15 5H0Z" fill="#e5a50f" />
        <path d="M6 26V13Q6 11 8 11H24Q26 11 26 13V26H21V17H11V26Z" fill="#3a96dd" />
      </svg>
    </PinnedApp>
    <PinnedApp $w={73} $ml={8} $on>
      <svg width="36" height="38" viewBox="0 0 36 38">
        <rect x="8" y="3" width="28" height="33" rx="2" fill="#107c41" />
        <rect x="22" y="3" width="14" height="11" fill="#33c481" />
        <rect x="8" y="3" width="14" height="11" fill="#21a366" />
        <rect x="22" y="14" width="14" height="11" fill="#21a366" />
        <rect x="8" y="25" width="28" height="11" fill="#185c37" />
        <rect x="0" y="11" width="18" height="18" rx="2" fill="#0f7b3f" />
        <path d="M5 15L13 25M13 15L5 25" stroke="#fff" strokeWidth="2.2" />
      </svg>
    </PinnedApp>
    <Tray>
      <TrayItem $w={48}><Chevron size={19} c="#eee" w={1.4} /></TrayItem>
      <TrayItem $w={48}>
        <svg width="24" height="14" viewBox="0 0 24 14">
          <rect x="0.5" y="0.5" width="21" height="13" fill="none" stroke="#fff" />
          <rect x="2" y="2" width="9" height="10" fill="#fff" />
          <rect x="22" y="5" width="2" height="4" fill="#fff" />
        </svg>
      </TrayItem>
      <TrayItem $w={46}>
        <svg width="26" height="24" viewBox="0 0 26 24">
          <path d="M0 14A5 5 0 0 1 5 7A7 7 0 0 1 18 7A5 5 0 0 1 20 16H2Z" fill="#bbb" />
          <path d="M0 14A5 5 0 0 1 9 5L11 16H2Z" fill="#eee" />
          <circle cx="18" cy="17" r="7" fill="#fff" />
          <path d="M14 17A4 4 0 0 1 22 15M22 17A4 4 0 0 1 14 19" fill="none" stroke="#0078d4" strokeWidth="1.6" />
        </svg>
      </TrayItem>
      <TrayItem $w={55}>
        <svg width="20" height="20" viewBox="0 0 20 20">
          <path d="M1 20A18 18 0 0 1 18 1M6 20A14 14 0 0 1 18 6M10 20A9 9 0 0 1 18 11" fill="none" stroke="#bbb" strokeWidth="1.2" />
          <circle cx="17" cy="18" r="2" fill="#fff" />
        </svg>
      </TrayItem>
      <TrayItem $w={37}>
        <svg width="22" height="22" viewBox="0 0 22 22">
          <path d="M1 8H5L11 2V20L5 14H1Z" fill="none" stroke="#fff" strokeWidth="1.2" />
          <path d="M14 8Q16 11 14 14M17 5Q20 11 17 17" fill="none" stroke="#999" strokeWidth="1.2" />
        </svg>
      </TrayItem>
      <TrayItem $w={44} $fs={20}>あ</TrayItem>
      <TrayItem $w={44}>
        <svg width="24" height="23" viewBox="0 0 24 23">
          <rect width="24" height="23" fill="#fff" />
          <path d="M4 21L10 2H13L20 21H17L12 7L7 21Z" fill="#111" />
        </svg>
      </TrayItem>
      <Clock>
        <span>23:22</span>
        <span>2020/09/02</span>
      </Clock>
      <NotifyWrap>
        <svg width="26" height="28" viewBox="0 0 26 28">
          <path d="M1 1H25V20H9L6 25V20H1Z" fill="#fff" />
          <path d="M5 6H21M5 10H21M5 14H17" stroke="#222" strokeWidth="1.2" />
        </svg>
        <NotifyBadge>1</NotifyBadge>
      </NotifyWrap>
      <DesktopEdge />
    </Tray>
  </Taskbar>
)

const App = () => (
  <Page>
    <GlobalStyle />
    <Header />
    <RibbonBar />
    <Formula />
    <Sheet />
    <SheetTabs />
    <Status />
    <Task />
  </Page>
)

export default App
